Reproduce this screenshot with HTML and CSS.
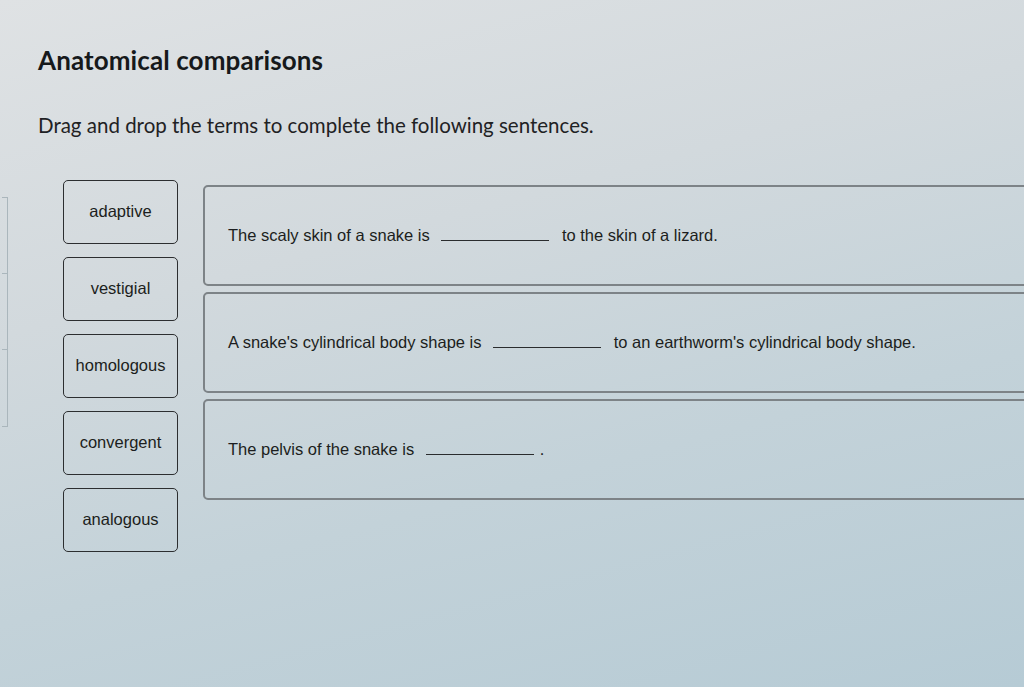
FILE: index.html
```html
<!DOCTYPE html>
<html lang="en">
<head>
  <meta charset="UTF-8" />
  <title>Anatomical comparisons</title>
  <link rel="stylesheet" href="styles.css">
</head>
<body>
  <h1 class="title">Anatomical comparisons</h1>
  <p class="instructions">Drag and drop the terms to complete the following sentences.</p>

  <div class="workspace">
    <div class="edge">
      <div class="edge-cell"></div>
      <div class="edge-cell"></div>
      <div class="edge-cell"></div>
    </div>

    <!-- draggable terms -->
    <div class="terms">
      <div class="term">adaptive</div>
      <div class="term">vestigial</div>
      <div class="term">homologous</div>
      <div class="term">convergent</div>
      <div class="term">analogous</div>
    </div>

    <!-- sentences with drop targets -->
    <div class="sentences">
      <div class="sentence">
        <p>The scaly skin of a snake is <span class="blank"></span> to the skin of a lizard.</p>
      </div>
      <div class="sentence">
        <p>A snake's cylindrical body shape is <span class="blank"></span> to an earthworm's cylindrical body shape.</p>
      </div>
      <div class="sentence">
        <p>The pelvis of the snake is <span class="blank"></span><span class="dot">.</span></p>
      </div>
    </div>
  </div>
</body>
</html>
```

FILE: styles.css
```css
html {
  box-sizing: border-box;
}
*, *:before, *:after {
  box-sizing: inherit;
}

body {
  margin: 0;
  width: 1024px;
  height: 687px;
  overflow: hidden;
  font-family: Lato, 'Open Sans', sans-serif;
  color: #1b1d1f;
  background: linear-gradient(165deg, #dfe2e4 0%, #d2d9dd 35%, #c3d2d9 65%, #b6cbd5 100%);
}

.title {
  margin: 0;
  padding: 44px 0 0 38px;
  font-size: 26px;
  font-weight: 700;
  line-height: 32px;
  letter-spacing: 0.1px;
  color: #16191b;
}

.instructions {
  margin: 0;
  padding: 36px 0 0 38px;
  font-size: 20.5px;
  line-height: 26px;
  color: #1f2224;
}

.workspace {
  display: flex;
  align-items: flex-start;
  margin-top: 42px;
}

/* faint edge of the panel behind, on the far left */
.edge {
  width: 6px;
  margin: 17px 0 0 2px;
  border: 1px solid #aab6bc;
  border-left: none;
}
.edge-cell {
  height: 76px;
  border-bottom: 1px solid #aab6bc;
}
.edge-cell:last-child {
  border-bottom: none;
}

.terms {
  display: flex;
  flex-direction: column;
  gap: 13px;
  margin-left: 55px;
  font-family: 'Liberation Sans', Arial, sans-serif;
}

.term {
  width: 115px;
  height: 64px;
  display: flex;
  align-items: center;
  justify-content: center;
  border: 1.5px solid #2c2e30;
  border-radius: 5px;
  font-size: 16.5px;
  color: #1c1e20;
  padding-bottom: 2px;
}

.sentences {
  display: flex;
  flex-direction: column;
  gap: 6px;
  margin: 5px -40px 0 25px;
  flex: 1;
  font-family: 'Liberation Sans', Arial, sans-serif;
}

.sentence {
  height: 101px;
  display: flex;
  align-items: center;
  padding-left: 23px;
  border: 2px solid #7d8387;
  border-radius: 5px;
  font-size: 16.5px;
  color: #1c1e20;
}

.sentence p {
  margin: 0;
  white-space: nowrap;
}

.blank {
  display: inline-block;
  width: 108px;
  height: 15px;
  margin: 0 8px 0 7px;
  border-bottom: 1px solid #2a2c2e;
}

.dot {
  margin-left: -2px;
}
```
